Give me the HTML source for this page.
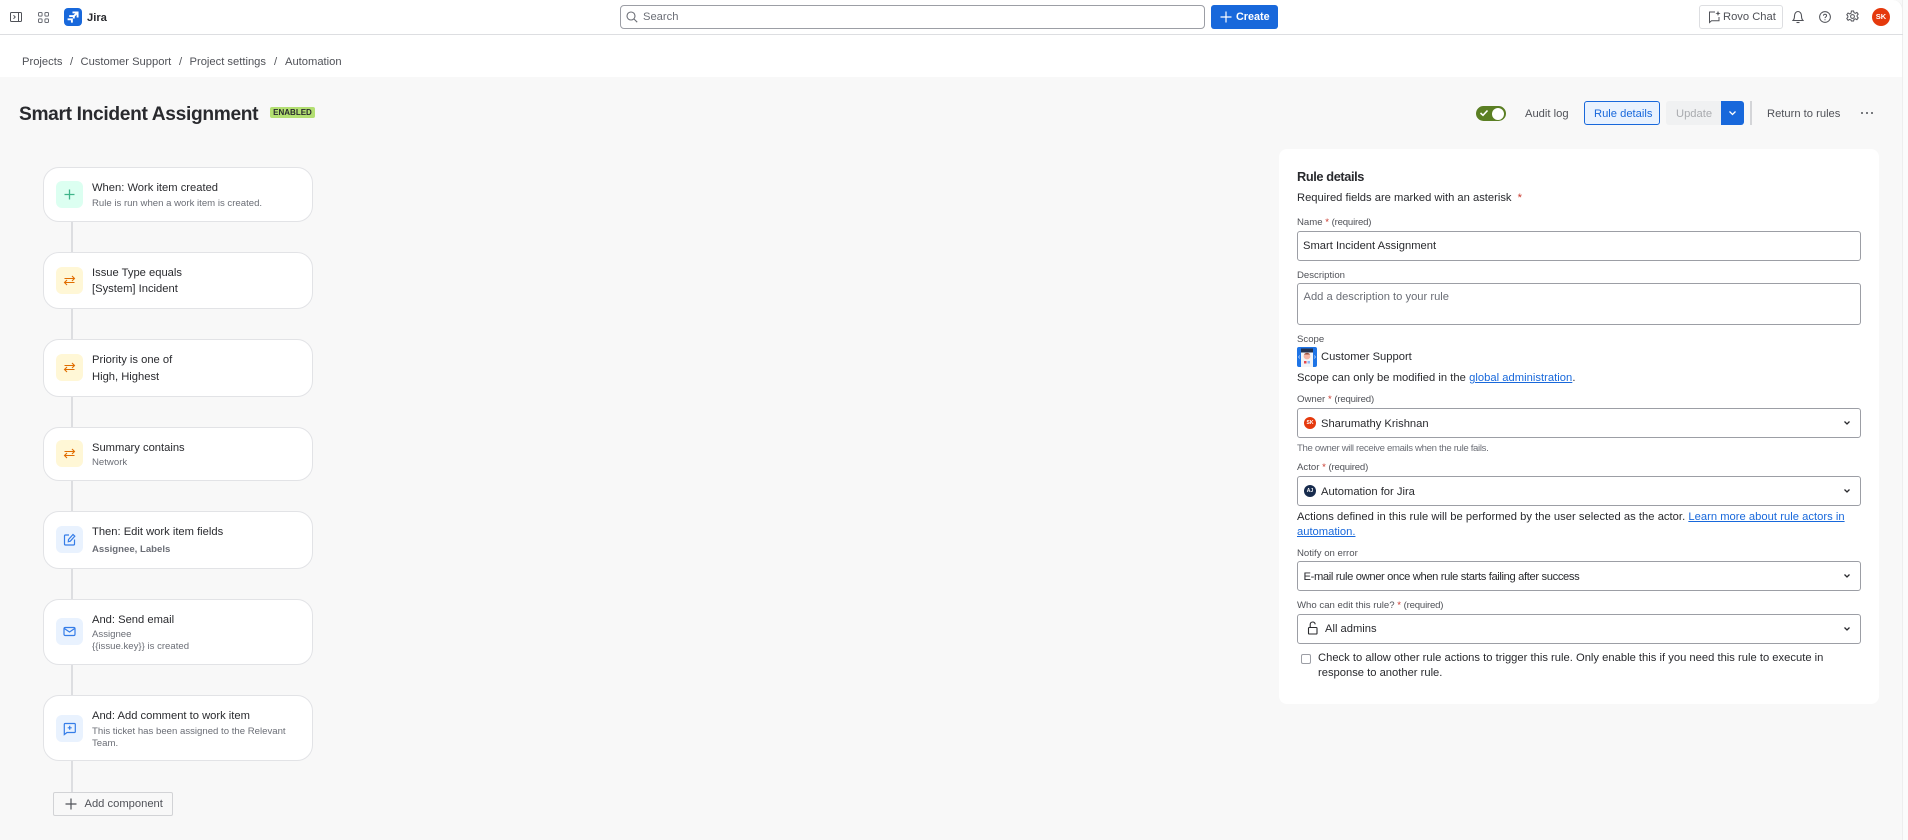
<!DOCTYPE html>
<html lang="en"><head><meta charset="utf-8"><title>Smart Incident Assignment</title>
<style>
html,body{margin:0;padding:0}
body{width:1908px;height:840px;overflow:hidden;position:relative;background:#fbfbfb;font-family:"Liberation Sans",sans-serif;color:#292A2E;font-size:11.2px}
.a,.t{position:absolute;box-sizing:border-box}
.t{white-space:nowrap;line-height:16px;height:16px;margin-top:1px}
.n{margin-top:0}
.s{font-size:9.6px;color:#505258}
.q{letter-spacing:-.2px}
.g{color:#6B6E76}
.card{position:absolute;left:43px;width:270px;background:#fff;border:1.5px solid #E2E3E6;border-radius:16px;box-sizing:border-box}
.ib{position:absolute;left:56px;width:27px;height:27px;border-radius:6px}
.ib svg{position:absolute;left:0;top:0}
.f{position:absolute;left:1297px;width:564px;background:#fff;border:1px solid #9C9EA5;border-radius:3px;box-sizing:border-box}
.ch{position:absolute;left:1842px}
a{color:#1868DB;text-decoration:underline}
.r{color:#C9372C}
svg{display:block}
</style></head><body>
<!-- main white -->
<div class="a" style="left:0;top:0;width:1903px;height:840px;background:#F8F8F8;border-right:1px solid #EEEEEE"></div>
<div class="a" style="left:0;top:0;width:1903px;height:77px;background:#fff;border-top-right-radius:10px;border-right:1px solid #EEEEEE"></div>
<div class="a" style="left:0;top:34px;width:1903px;height:1px;background:#DDDEE1"></div>

<!-- top nav -->
<svg class="a" style="left:10px;top:12px" width="12" height="10" viewBox="0 0 12 10" fill="none" stroke="#505258"><rect x=".5" y=".5" width="11" height="9" rx="1"/><path d="M8.500 .5v9M3.500 3.200 5.200 5 3.500 6.800"/></svg>
<svg class="a" style="left:38px;top:12px" width="11" height="11" viewBox="0 0 11 11" fill="none" stroke="#6B6E76"><rect x=".5" y=".5" width="3.600" height="3.600" rx="1"/><rect x="6.900" y=".5" width="3.600" height="3.600" rx="1"/><rect x=".5" y="6.900" width="3.600" height="3.600" rx="1"/><rect x="6.900" y="6.900" width="3.600" height="3.600" rx="1"/></svg>
<svg class="a" style="left:64px;top:8px" width="18" height="18" viewBox="0 0 18 18"><rect width="18" height="18" rx="4" fill="#1868DB"/><g fill="none" stroke="#fff" stroke-width="1.900"><path d="M8.500 4.400H13.600V9.500"/><path d="M13.300 4.700 9.300 8.700"/><path d="M5.200 8.100H9.800V10.500"/><path d="M3.600 11.300H7.900V14.600"/></g></svg>
<div class="t" style="left:87px;top:9px;font-weight:700;font-size:11.2px">Jira</div>

<div class="a" style="left:620px;top:5px;width:585px;height:24px;border:1px solid #9C9EA5;border-radius:4px;background:#fff"></div>
<svg class="a" style="left:626px;top:11px" width="12" height="12" viewBox="0 0 12 12" fill="none" stroke="#6B6E76" stroke-width="1.100"><circle cx="5" cy="5" r="4"/><path d="M8 8l3.200 3.200"/></svg>
<div class="t n g" style="left:643px;top:9px">Search</div>
<div class="a" style="left:1211px;top:5px;width:67px;height:24px;background:#1868DB;border-radius:3px"></div>
<svg class="a" style="left:1220px;top:11px" width="12" height="12" viewBox="0 0 12 12" stroke="#fff" stroke-width="1.200"><path d="M6 .5v11M.5 6h11"/></svg>
<div class="t n" style="left:1236px;top:9px;color:#fff;font-weight:700;font-size:10.800px">Create</div>

<div class="a" style="left:1699px;top:5px;width:84px;height:24px;border:1px solid #DDDEE1;border-radius:3px;background:#fff"></div>
<svg class="a" style="left:1708px;top:10px" width="14" height="14" viewBox="0 0 14 14" fill="none" stroke="#505258" stroke-width="1"><path d="M7 2H1.500v10.500L3.500 10.800H11V7"/><path d="M10 .8l.7 1.900 1.900.7-1.900.7-.7 1.900-.7-1.900-1.900-.7 1.900-.7z" fill="#505258" stroke="none"/></svg>
<div class="t" style="left:1723px;top:8px;color:#505258">Rovo Chat</div>
<svg class="a" style="left:1792px;top:10px" width="12" height="14" viewBox="0 0 12 14" fill="none" stroke="#505258" stroke-width="1.100"><path d="M1 10.500h10c-1-1-1.500-2-1.500-4.500C9.500 3.500 8 1.500 6 1.500S2.500 3.500 2.500 6C2.500 8.500 2 9.500 1 10.500z"/><path d="M4.500 12.500h3"/></svg>
<svg class="a" style="left:1819px;top:11px" width="12" height="12" viewBox="0 0 12 12" fill="none" stroke="#505258" stroke-width="1"><circle cx="6" cy="6" r="5.400"/><path d="M4.400 4.700C4.500 3.800 5.100 3.300 6 3.300S7.600 3.900 7.600 4.700C7.600 5.800 6 5.900 6 7.100"/><path d="M6 8.300v1"/></svg>
<svg class="a" style="left:1846px;top:10px" width="13" height="13" viewBox="0 0 13 13" fill="none" stroke="#505258" stroke-width="1"><path d="M5.400 1h2.200l.4 1.700 1.400.6 1.500-.9 1.300 1.700-1.100 1.300v1.200l1.100 1.300-1.300 1.800-1.500-.9-1.400.6-.4 1.600H5.400L5 10l-1.400-.6-1.500.9L.8 8.500l1.100-1.300V6L.8 4.700l1.300-1.700 1.500.9L5 3.300z"/><circle cx="6.500" cy="6.500" r="1.900"/></svg>
<div class="a" style="left:1872px;top:7.500px;width:18px;height:18px;border-radius:50%;background:#E5390D;color:#fff;font-weight:700;font-size:7.500px;line-height:18px;text-align:center">SK</div>

<!-- breadcrumb -->
<div class="t n" style="left:22px;top:54px;color:#505258">Projects</div>
<div class="t n" style="left:70px;top:54px;color:#505258">/</div>
<div class="t n" style="left:80.500px;top:54px;color:#505258">Customer Support</div>
<div class="t n" style="left:179px;top:54px;color:#505258">/</div>
<div class="t n" style="left:189.500px;top:54px;color:#505258">Project settings</div>
<div class="t n" style="left:274px;top:54px;color:#505258">/</div>
<div class="t n" style="left:285px;top:54px;color:#505258">Automation</div>

<!-- header -->
<div class="t" style="left:19px;top:102px;height:24px;line-height:24px;font-size:19.200px;font-weight:700;letter-spacing:-.34px">Smart Incident Assignment</div>
<div class="a" style="left:270px;top:107px;width:45px;height:11px;background:#B3DF72;border-radius:2px;font-size:8px;font-weight:700;line-height:11px;text-align:center;color:#292A2E">ENABLED</div>

<div class="a" style="left:1476px;top:106px;width:30px;height:15px;border-radius:8px;background:#5B7F24"></div>
<div class="a" style="left:1492px;top:107.500px;width:12px;height:12px;border-radius:50%;background:#fff"></div>
<svg class="a" style="left:1479px;top:108px" width="10" height="10" viewBox="0 0 10 10" fill="none" stroke="#fff" stroke-width="1.600"><path d="M1.500 5 4 7.300 8.500 2.500"/></svg>
<div class="t" style="left:1525px;top:105px;color:#505258">Audit log</div>
<div class="a" style="left:1584px;top:101px;width:76px;height:24px;background:#E9F2FE;border:1px solid #1868DB;border-radius:3px"></div>
<div class="t" style="left:1594px;top:105px;color:#1868DB;font-weight:400">Rule details</div>
<div class="a" style="left:1666px;top:101px;width:55px;height:24px;background:#F0F1F2;border-radius:3px 0 0 3px"></div>
<div class="t" style="left:1676px;top:105px;color:#A9ABAF">Update</div>
<div class="a" style="left:1721px;top:101px;width:23px;height:24px;background:#1868DB;border-radius:0 3px 3px 0"></div>
<svg class="a" style="left:1728px;top:110px" width="9" height="7" viewBox="0 0 9 7" fill="none" stroke="#fff" stroke-width="1.300"><path d="M1.500 1.500 4.500 4.500 7.500 1.500"/></svg>
<div class="a" style="left:1750px;top:101px;width:2px;height:24px;background:#D4D5D8"></div>
<div class="t" style="left:1767px;top:105px;color:#505258">Return to rules</div>
<svg class="a" style="left:1860px;top:111px" width="14" height="4" viewBox="0 0 14 4" fill="#505258"><circle cx="2" cy="2" r="1"/><circle cx="7" cy="2" r="1"/><circle cx="12" cy="2" r="1"/></svg>

<!-- flow -->
<div class="a" style="left:71px;top:222px;width:2px;height:570px;background:#DDDEE1"></div>

<div class="card" style="top:167px;height:55px"></div>
<div class="ib" style="top:181px;background:#DCFFF1"><svg width="27" height="27" viewBox="0 0 27 27" stroke="#3FB58A" stroke-width="1.300"><path d="M13.500 8.500v10M8.500 13.500h10"/></svg></div>
<div class="t" style="left:92px;top:179px">When: Work item created</div>
<div class="t s g" style="left:92px;top:195px;color:#6B6E76">Rule is run when a work item is created.</div>

<div class="card" style="top:252px;height:57px"></div>
<div class="ib" style="top:267px;background:#FFF7D6"><svg width="27" height="27" viewBox="0 0 27 27" fill="none" stroke="#E06C00" stroke-width="1.100"><path d="M8.500 11.500h10M16 9l2.500 2.500L16 14M18.500 15.500h-10M11 13l-2.500 2.500L11 18"/></svg></div>
<div class="t" style="left:92px;top:264px">Issue Type equals</div>
<div class="t" style="left:92px;top:280px">[System] Incident</div>

<div class="card" style="top:339px;height:58px"></div>
<div class="ib" style="top:354px;background:#FFF7D6"><svg width="27" height="27" viewBox="0 0 27 27" fill="none" stroke="#E06C00" stroke-width="1.100"><path d="M8.500 11.500h10M16 9l2.500 2.500L16 14M18.500 15.500h-10M11 13l-2.500 2.500L11 18"/></svg></div>
<div class="t" style="left:92px;top:351px">Priority is one of</div>
<div class="t" style="left:92px;top:368px">High, Highest</div>

<div class="card" style="top:427px;height:54px"></div>
<div class="ib" style="top:440px;background:#FFF7D6"><svg width="27" height="27" viewBox="0 0 27 27" fill="none" stroke="#E06C00" stroke-width="1.100"><path d="M8.500 11.500h10M16 9l2.500 2.500L16 14M18.500 15.500h-10M11 13l-2.500 2.500L11 18"/></svg></div>
<div class="t" style="left:92px;top:439px">Summary contains</div>
<div class="t s" style="left:92px;top:454px;color:#6B6E76">Network</div>

<div class="card" style="top:511px;height:58px"></div>
<div class="ib" style="top:526px;background:#E9F2FE"><svg width="27" height="27" viewBox="0 0 27 27" fill="none" stroke="#357DE8" stroke-width="1.200"><path d="M13 9H9.500a1 1 0 0 0-1 1v8a1 1 0 0 0 1 1h8a1 1 0 0 0 1-1v-4.500"/><path d="M12.500 13.500 17 8.500l1.800 1.700-4.500 5-2 .5z"/></svg></div>
<div class="t" style="left:92px;top:523px">Then: Edit work item fields</div>
<div class="t s" style="left:92px;top:541px;color:#6B6E76;font-weight:700">Assignee, Labels</div>

<div class="card" style="top:599px;height:66px"></div>
<div class="ib" style="top:618px;background:#E9F2FE"><svg width="27" height="27" viewBox="0 0 27 27" fill="none" stroke="#357DE8" stroke-width="1.200"><rect x="8" y="9.500" width="11" height="8" rx="1.200"/><path d="M8.300 10.500l5.200 3.500 5.200-3.500"/></svg></div>
<div class="t" style="left:92px;top:611px">And: Send email</div>
<div class="t s" style="left:92px;top:626px;color:#6B6E76">Assignee</div>
<div class="t s" style="left:92px;top:638px;color:#6B6E76">{{issue.key}} is created</div>

<div class="card" style="top:695px;height:66px"></div>
<div class="ib" style="top:715px;background:#E9F2FE"><svg width="27" height="27" viewBox="0 0 27 27" fill="none" stroke="#357DE8" stroke-width="1.200"><path d="M9 8.500h9.500a.8.800 0 0 1 .8.800v7.400a.8.800 0 0 1-.8.800h-7.500L8.300 19.500V9.300A.8.800 0 0 1 9 8.500z"/><path d="M13.700 10.800v4M11.700 12.800h4"/></svg></div>
<div class="t" style="left:92px;top:707px">And: Add comment to work item</div>
<div class="t s" style="left:92px;top:723px;color:#6B6E76">This ticket has been assigned to the Relevant</div>
<div class="t s" style="left:92px;top:735px;color:#6B6E76">Team.</div>

<div class="a" style="left:53px;top:792px;width:120px;height:24px;background:#F8F8F8;border:1px solid #D2D3D6;border-radius:2px"></div>
<svg class="a" style="left:65px;top:798px" width="12" height="12" viewBox="0 0 12 12" stroke="#505258" stroke-width="1.200"><path d="M6 .5v11M.5 6h11"/></svg>
<div class="t" style="left:84.500px;top:795px;color:#505258">Add component</div>

<!-- panel -->
<div class="a" style="left:1279px;top:149px;width:600px;height:555px;background:#fff;border-radius:8px"></div>
<div class="t" style="left:1297px;top:168px;font-weight:700;font-size:12.800px;letter-spacing:-.4px">Rule details</div>
<div class="t" style="left:1297px;top:189px">Required fields are marked with an asterisk <span class="r" style="margin-left:3px">*</span></div>

<div class="t s" style="left:1297px;top:214px">Name <span class="r">*</span> <span class="q">(required)</span></div>
<div class="f" style="top:231px;height:30px"></div>
<div class="t" style="left:1303px;top:237px">Smart Incident Assignment</div>

<div class="t s" style="left:1297px;top:267px">Description</div>
<div class="f" style="top:283px;height:42px"></div>
<div class="t g" style="left:1303.500px;top:288px">Add a description to your rule</div>

<div class="t s" style="left:1297px;top:331px">Scope</div>
<svg class="a" style="left:1297px;top:347px" width="20" height="20" viewBox="0 0 20 20"><rect width="20" height="20" rx="2" fill="#1E74E6"/><rect x="4" y="1.500" width="12" height="18.500" fill="#F2F4F7"/><rect x="4" y="1.500" width="12" height="4" fill="#24324F"/><circle cx="10" cy="9" r="3.400" fill="#F5B5A6"/><path d="M7 7.500c1-2 5-2 6 0z" fill="#8a4b3a"/><rect x="7" y="14" width="2.500" height="2.500" fill="#E5484D"/><rect x="10.500" y="14" width="2.500" height="2.500" fill="#8FB8F6"/><path d="M2.500 8.500 1.700 10l.8 1.500M17.500 8.500l.8 1.500-.8 1.500" stroke="#fff" stroke-width=".6" fill="none"/></svg>
<div class="t" style="left:1321px;top:348px">Customer Support</div>
<div class="t" style="left:1297px;top:369px;letter-spacing:.03px">Scope can only be modified in the <a>global administration</a>.</div>

<div class="t s" style="left:1297px;top:391px">Owner <span class="r">*</span> <span class="q">(required)</span></div>
<div class="f" style="top:408px;height:30px"></div>
<div class="a" style="left:1304px;top:417px;width:12px;height:12px;border-radius:50%;background:#E5390D;color:#fff;font-size:5px;font-weight:700;line-height:12px;text-align:center">SK</div>
<div class="t" style="left:1321px;top:415px">Sharumathy Krishnan</div>
<svg class="ch" style="top:420px" width="10" height="7" viewBox="0 0 10 7" fill="none" stroke="#292A2E" stroke-width="1.300"><path d="M2.500 1.500 5 4 7.500 1.500"/></svg>
<div class="t s g" style="left:1297px;top:440px;color:#6B6E76;letter-spacing:-.33px">The owner will receive emails when the rule fails.</div>

<div class="t s" style="left:1297px;top:459px">Actor <span class="r">*</span> <span class="q">(required)</span></div>
<div class="f" style="top:476px;height:30px"></div>
<div class="a" style="left:1304px;top:485px;width:12px;height:12px;border-radius:50%;background:#172B4D;color:#fff;font-size:5px;font-weight:700;line-height:12px;text-align:center">AJ</div>
<div class="t" style="left:1321px;top:483px">Automation for Jira</div>
<svg class="ch" style="top:488px" width="10" height="7" viewBox="0 0 10 7" fill="none" stroke="#292A2E" stroke-width="1.300"><path d="M2.500 1.500 5 4 7.500 1.500"/></svg>
<div class="t" style="left:1297px;top:508px;letter-spacing:.025px">Actions defined in this rule will be performed by the user selected as the actor. <a>Learn more about rule actors in</a></div>
<div class="t" style="left:1297px;top:523px"><a>automation.</a></div>

<div class="t s" style="left:1297px;top:545px">Notify on error</div>
<div class="f" style="top:561px;height:30px"></div>
<div class="t" style="left:1303.500px;top:568px;letter-spacing:-.36px">E-mail rule owner once when rule starts failing after success</div>
<svg class="ch" style="top:573px" width="10" height="7" viewBox="0 0 10 7" fill="none" stroke="#292A2E" stroke-width="1.300"><path d="M2.500 1.500 5 4 7.500 1.500"/></svg>

<div class="t s" style="left:1297px;top:597px">Who can edit this rule? <span class="r">*</span> <span class="q">(required)</span></div>
<div class="f" style="top:614px;height:30px"></div>
<svg class="a" style="left:1307px;top:621px" width="12" height="14" viewBox="0 0 12 14" fill="none" stroke="#292A2E" stroke-width="1.100"><rect x="1.500" y="6.500" width="8.500" height="6.500" rx=".8"/><path d="M3.200 6.500V3.500C3.200 2 4.300 1 5.700 1S8 2 8.200 3.300"/></svg>
<div class="t" style="left:1325px;top:620px">All admins</div>
<svg class="ch" style="top:626px" width="10" height="7" viewBox="0 0 10 7" fill="none" stroke="#292A2E" stroke-width="1.300"><path d="M2.500 1.500 5 4 7.500 1.500"/></svg>

<div class="a" style="left:1301px;top:654px;width:10px;height:10px;border:1px solid #9C9EA5;border-radius:2px;background:#fff"></div>
<div class="t" style="left:1318px;top:649px;letter-spacing:.01px">Check to allow other rule actions to trigger this rule. Only enable this if you need this rule to execute in</div>
<div class="t" style="left:1318px;top:664px">response to another rule.</div>
</body></html>
